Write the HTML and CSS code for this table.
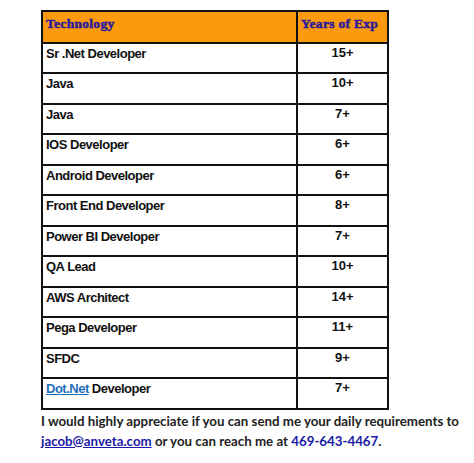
FILE: index.html
```html
<!DOCTYPE html>
<html>
<head>
<meta charset="utf-8">
<link rel="stylesheet" href="styles.css">
</head>
<body>
<div class="page">
  <table class="exp">
    <thead>
      <tr><th class="tech">Technology</th><th class="yrs">Years of Exp</th></tr>
    </thead>
    <tbody>
      <tr><td>Sr .Net Developer</td><td class="num">15+</td></tr>
      <tr><td>Java</td><td class="num">10+</td></tr>
      <tr><td>Java</td><td class="num">7+</td></tr>
      <tr><td>IOS Developer</td><td class="num">6+</td></tr>
      <tr><td>Android Developer</td><td class="num">6+</td></tr>
      <tr><td>Front End Developer</td><td class="num">8+</td></tr>
      <tr><td>Power BI Developer</td><td class="num">7+</td></tr>
      <tr><td>QA Lead</td><td class="num">10+</td></tr>
      <tr><td>AWS Architect</td><td class="num">14+</td></tr>
      <tr><td>Pega Developer</td><td class="num">11+</td></tr>
      <tr><td>SFDC</td><td class="num">9+</td></tr>
      <tr><td><a class="dotnet" href="#">Dot.Net</a> Developer</td><td class="num">7+</td></tr>
    </tbody>
  </table>
  <p class="note">I would highly appreciate if you can send me your daily requirements to <a class="mail" href="#">jacob@anveta.com</a> or you can reach me at <span class="phone">469-643-4467</span>.</p>
</div>
</body>
</html>
```
FILE: styles.css
```css
html, body {
  margin: 0;
  padding: 0;
  background: #fff;
}
.page {
  padding: 10px 0 0 41px;
}
.exp {
  border-collapse: collapse;
  width: 348px;
  table-layout: fixed;
}
.exp th, .exp td {
  border: 2px solid #111;
  vertical-align: top;
  padding: 0;
  box-sizing: border-box;
}
.exp thead tr { height: 31.5px; }
.exp tbody tr { height: 30.5px; }
.exp thead th {
  background: #fb9a0d;
  color: #2c1a9c;
  font-family: "Liberation Serif", "DejaVu Serif", serif;
  font-weight: bold;
  font-size: 13.5px;
  letter-spacing: 0.3px;
  -webkit-text-stroke: 0.5px #2c1a9c;
  text-align: left;
  white-space: nowrap;
  padding: 4px 2px 0 3px;
  line-height: 16px;
}
.exp thead th.tech { width: 255px; }
.exp td {
  font-family: "Liberation Sans", Arial, sans-serif;
  font-weight: bold;
  font-size: 13px;
  letter-spacing: -0.5px;
  color: #111;
  padding: 2px 3px 0 3px;
  line-height: 16px;
}
.exp td.num {
  text-align: center;
  letter-spacing: 0;
  padding-top: 1px;
}
.dotnet {
  color: #1f6fb8;
  text-decoration: underline;
}
.note {
  margin: 1px 0 0 0;
  font-family: Lato, "Open Sans", sans-serif;
  font-weight: bold;
  font-size: 13.3px;
  line-height: 20px;
  color: #222;
  width: 432px;
}
.mail {
  color: #1a1aa6;
  text-decoration: underline;
}
.phone {
  color: #1a1aa6;
}
```
